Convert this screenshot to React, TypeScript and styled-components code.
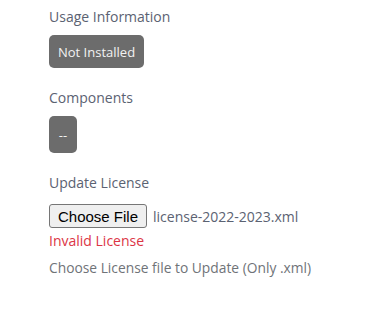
import React from 'react';
import styled, { createGlobalStyle } from 'styled-components';

const GlobalStyle = createGlobalStyle`
  html, body {
    margin: 0;
    padding: 0;
    background: #ffffff;
  }
  body {
    font-family: "Open Sans", "Noto Sans", Arial, sans-serif;
  }
`;

const Page = styled.div`
  display: flex;
  flex-direction: column;
  padding: 6px 0 0 49px;
`;

const Section = styled.section`
  display: flex;
  flex-direction: column;
  align-items: flex-start;
  margin-bottom: 19px;
`;

const Label = styled.div<{ $gap?: number }>`
  font-size: 14px;
  line-height: 21px;
  color: #5b6272;
  margin-bottom: ${({ $gap = 8 }) => $gap}px;
`;

const Badge = styled.span<{ $square?: boolean }>`
  display: inline-flex;
  align-items: center;
  justify-content: center;
  background: #6c6c6c;
  color: #f2f2f2;
  font-size: 13px;
  border-radius: 5px;
  height: ${({ $square }) => ($square ? '37px' : '33px')};
  padding: 0 ${({ $square }) => ($square ? '0' : '9px')};
  width: ${({ $square }) => ($square ? '28px' : 'auto')};
`;

const FileRow = styled.div`
  display: flex;
  align-items: center;
  gap: 6px;
`;

const FileButton = styled.label`
  display: inline-flex;
  align-items: center;
  height: 24px;
  box-sizing: border-box;
  padding: 0 8px;
  font-family: "Liberation Sans", Arial, sans-serif;
  font-size: 15px;
  color: #000;
  background: #efefef;
  border: 1px solid #767676;
  border-radius: 3px;
  cursor: pointer;
`;

const FileName = styled.span`
  font-size: 14px;
  color: #5b6272;
`;

const ErrorText = styled.div`
  font-size: 14px;
  line-height: 21px;
  color: #dc3545;
  margin-top: 2px;
`;

const Hint = styled.div`
  font-size: 13.8px;
  line-height: 21px;
  color: #6f7378;
  margin-top: 6px;
`;

export default function App() {
  return (
    <>
      <GlobalStyle />
      <Page>
        <Section>
          <Label>Usage Information</Label>
          <Badge>Not Installed</Badge>
        </Section>
        <Section>
          <Label>Components</Label>
          <Badge $square>--</Badge>
        </Section>
        <Section>
          <Label $gap={11}>Update License</Label>
          <FileRow>
            <FileButton>Choose File</FileButton>
            <FileName>license-2022-2023.xml</FileName>
          </FileRow>
          <ErrorText>Invalid License</ErrorText>
          <Hint>Choose License file to Update (Only .xml)</Hint>
        </Section>
      </Page>
    </>
  );
}
